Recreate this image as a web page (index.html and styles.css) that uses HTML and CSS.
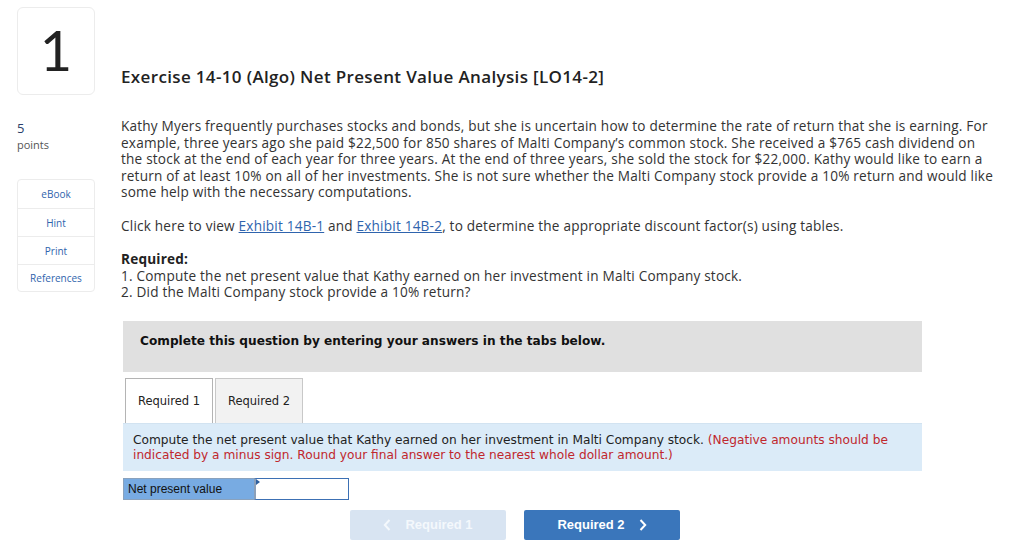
FILE: index.html
```html
<!DOCTYPE html>
<html>
<head>
<meta charset="utf-8">
<link rel="stylesheet" href="styles.css">
</head>
<body>
<div class="page">
  <aside class="side">
    <div class="qnum">1</div>
    <div class="points"><span class="pts-num">5</span><span class="pts-label">points</span></div>
    <ul class="tools">
      <li>eBook</li>
      <li>Hint</li>
      <li>Print</li>
      <li>References</li>
    </ul>
  </aside>
  <main class="main">
    <h1 class="title">Exercise 14-10 (Algo) Net Present Value Analysis [LO14-2]</h1>
    <p class="para">Kathy Myers frequently purchases stocks and bonds, but she is uncertain how to determine the rate of return that she is earning. For example, three years ago she paid $22,500 for 850 shares of Malti Company’s common stock. She received a $765 cash dividend on the stock at the end of each year for three years. At the end of three years, she sold the stock for $22,000. Kathy would like to earn a return of at least 10% on all of her investments. She is not sure whether the Malti Company stock provide a 10% return and would like some help with the necessary computations.</p>
    <p class="para">Click here to view <a href="#">Exhibit 14B-1</a> and <a href="#">Exhibit 14B-2</a>, to determine the appropriate discount factor(s) using tables.</p>
    <p class="para req"><strong>Required:</strong><br>1. Compute the net present value that Kathy earned on her investment in Malti Company stock.<br>2. Did the Malti Company stock provide a 10% return?</p>

    <div class="work">
      <div class="banner">Complete this question by entering your answers in the tabs below.</div>
      <div class="tabs">
        <div class="tab active">Required 1</div>
        <div class="tab">Required 2</div>
      </div>
      <div class="info">Compute the net present value that Kathy earned on her investment in Malti Company stock. <span class="warn">(Negative amounts should be indicated by a minus sign. Round your final answer to the nearest whole dollar amount.)</span></div>
      <div class="answer">
        <div class="ans-label">Net present value</div>
        <div class="ans-input"><span class="marker"></span></div>
      </div>
      <div class="nav">
        <button class="btn prev"><svg class="chev" width="8" height="12" viewBox="0 0 8 12"><path d="M6.5 1 L1.8 6 L6.5 11" fill="none" stroke="currentColor" stroke-width="2"/></svg>Required 1</button>
        <button class="btn next">Required 2<svg class="chev" width="8" height="12" viewBox="0 0 8 12"><path d="M1.5 1 L6.2 6 L1.5 11" fill="none" stroke="currentColor" stroke-width="2"/></svg></button>
      </div>
    </div>
  </main>
</div>
</body>
</html>
```
FILE: styles.css
```css
* { box-sizing: border-box; }
body {
  margin: 0;
  background: #fff;
  font-family: "Open Sans", "Lato", sans-serif;
  color: #333;
}
.page {
  display: flex;
  padding-left: 17px;
}
.side {
  width: 78px;
  flex: none;
}
.qnum {
  margin-top: 7px;
  height: 88px;
  border: 1px solid #ececec;
  border-radius: 6px;
  display: flex;
  align-items: center;
  justify-content: center;
  font-family: "Lato", sans-serif;
  font-size: 56px;
  font-weight: 400;
  color: #222;
  padding-bottom: 4px;
}
.points {
  margin-top: 24px;
  display: flex;
  flex-direction: column;
}
.pts-num { font-size: 13px; line-height: 18px; color: #2b3f6b; }
.pts-label { font-size: 11px; line-height: 15px; color: #555; }
.tools {
  list-style: none;
  margin: 27px 0 0;
  padding: 0;
  border: 1px solid #ececec;
  border-radius: 4px;
}
.tools li {
  height: 28px;
  display: flex;
  align-items: center;
  justify-content: center;
  font-size: 10px;
  color: #2f64ad;
  border-top: 1px solid #ececec;
}
.tools li:first-child { border-top: none; }
.tools li:last-child { height: 27px; }
.main {
  margin-left: 26px;
  width: 877px;
}
.title {
  margin: 65px 0 0;
  font-size: 17px;
  font-weight: 600;
  letter-spacing: 0.35px;
  color: #222;
  line-height: 24px;
}
.para {
  margin: 0;
  font-size: 13.6px;
  letter-spacing: 0.2px;
  line-height: 16.5px;
  color: #333;
}
.title + .para { margin-top: 29px; }
.para + .para { margin-top: 17px; }
.para a { color: #2f64ad; text-decoration: underline; }
.para strong { font-weight: 700; color: #222; }
.work {
  margin-top: 20px;
  padding-left: 2px;
  width: 801px;
}
.banner {
  background: #e0e0e0;
  height: 51px;
  padding: 13px 17px 0;
  font-family: "DejaVu Sans", Verdana, sans-serif;
  font-weight: 700;
  font-size: 12.15px;
  color: #111;
}
.tabs {
  display: flex;
  gap: 2px;
  margin-top: 6px;
  padding-left: 2px;
}
.tab {
  width: 88px;
  height: 45px;
  display: flex;
  align-items: center;
  justify-content: center;
  font-family: "DejaVu Sans", Verdana, sans-serif;
  font-size: 11.5px;
  color: #222;
  background: #f2f2f2;
  border: 1px solid #c8c8c8;
  border-bottom: none;
}
.tab.active { background: #fff; border-color: #b4b4b4; }
.info {
  background: #dbebf8;
  padding: 9px 10px 7px;
  font-family: "DejaVu Sans", Verdana, sans-serif;
  font-size: 12.2px;
  line-height: 15.5px;
  color: #222;
  border-top: 1px solid #d2e3f1;
}
.warn { color: #c0272d; }
.answer {
  display: flex;
  margin-top: 7px;
  height: 22px;
}
.ans-label {
  width: 131px;
  background: #78abe2;
  border: 1px solid #8aa2bd;
  border-right: none;
  font-family: "Liberation Sans", Arial, sans-serif;
  font-size: 12px;
  color: #111;
  padding: 3px 0 0 4px;
}
.ans-input {
  position: relative;
  width: 95px;
  border: 1px solid #3c70b4;
  border-left: 2px solid #8b9fb8;
  background: #fff;
}
.marker {
  position: absolute;
  left: 0;
  top: 0;
  width: 0;
  height: 0;
  border-top: 3px solid transparent;
  border-bottom: 3px solid transparent;
  border-left: 4px solid #2d5f9e;
}
.nav {
  display: flex;
  gap: 18px;
  margin-top: 10px;
  padding-left: 227px;
}
.btn {
  width: 156px;
  height: 30px;
  border: none;
  border-radius: 2px;
  font-family: "Liberation Sans", Arial, sans-serif;
  font-weight: 700;
  font-size: 13px;
  color: #fff;
  display: flex;
  align-items: center;
  justify-content: center;
  gap: 14px;
}
.btn .chev { display: block; }
.prev { background: #d8e4f2; color: #f4f8fc; }
.next { background: #3a76bb; }
```
